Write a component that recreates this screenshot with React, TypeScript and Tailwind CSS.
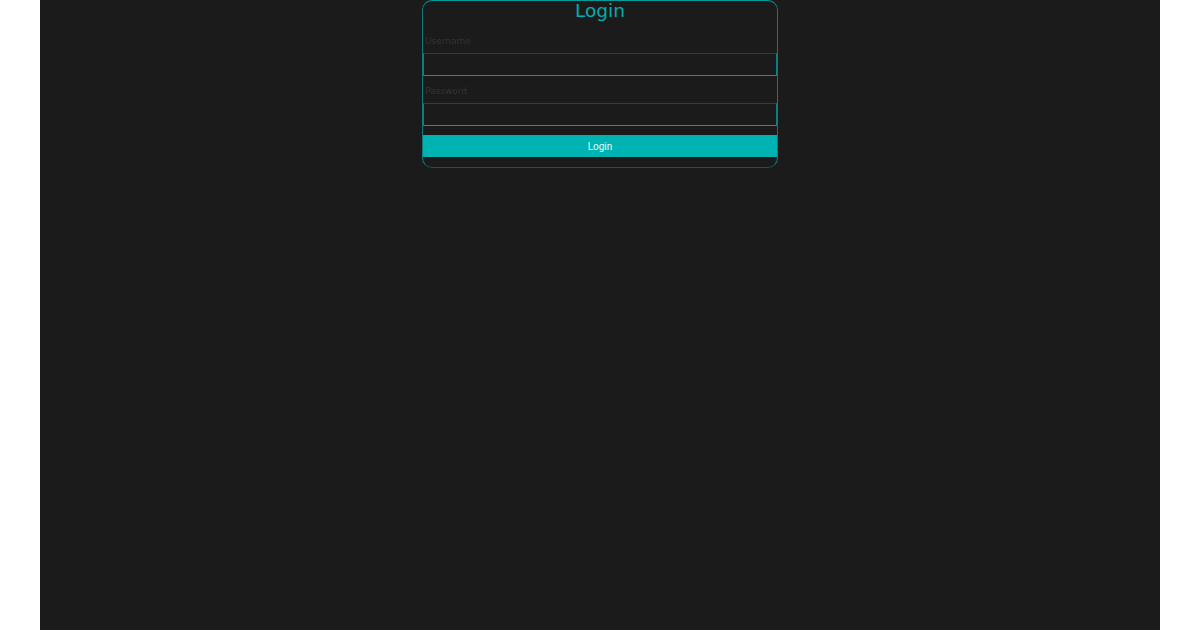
export default function App() {
  return (
    <div className="min-h-screen bg-white">
      <div className="mx-[40px] h-[630px] bg-[#1b1b1b] pt-0">
        <div
          className="mx-auto flex w-[356px] flex-col rounded-[10px] border border-t-[#009a9a] border-l-[#0f7a7a] border-r-[#0f7a7a] border-b-[#125858] pb-[10px]"
          style={{ fontFamily: '"DejaVu Sans", sans-serif' }}
        >
          <h1 className="text-center text-[18.5px] leading-[19px] text-[#00aeae]">Login</h1>

          <label className="mt-[15px] pl-[2px] text-[9px] leading-[13px] text-[#333333]">Username</label>
          <input
            type="text"
            className="mt-[5px] h-[23px] w-full border border-t-[#1d4646] border-l-[#0f8080] border-r-[#0f8080] border-b-[#0a9a9a] bg-transparent px-1 text-[11px] text-[#cccccc] outline-none"
          />

          <label className="mt-[9px] pl-[2px] text-[9px] leading-[13px] text-[#333333]">Password</label>
          <input
            type="password"
            className="mt-[5px] h-[23px] w-full border border-t-[#1d4646] border-l-[#0f8080] border-r-[#0f8080] border-b-[#0a9a9a] bg-transparent px-1 text-[11px] text-[#cccccc] outline-none"
          />

          <button
            className="mt-[9px] h-[22px] w-full bg-[#00b3b3] text-[10px] text-[#eaf7f7]"
            style={{ fontFamily: 'Roboto, "Liberation Sans", sans-serif' }}
          >
            Login
          </button>
        </div>
      </div>
    </div>
  );
}
